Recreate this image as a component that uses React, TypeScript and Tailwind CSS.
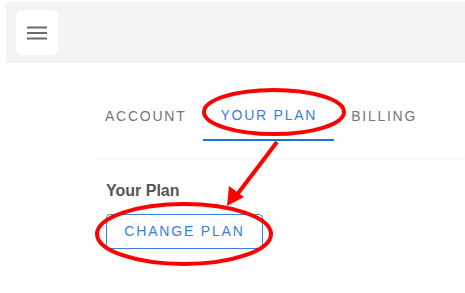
const font = { fontFamily: '"Liberation Sans", Arial, sans-serif' };

// Red markup drawn over the screenshot: two ellipses and an arrow.
function Annotations() {
  return (
    <svg
      className="pointer-events-none absolute inset-0"
      width="465"
      height="293"
      viewBox="0 0 465 293"
    >
      <ellipse cx="274" cy="112" rx="70" ry="22" fill="none" stroke="#f00" strokeWidth="4" />
      <ellipse cx="184" cy="234" rx="87" ry="30" fill="none" stroke="#f00" strokeWidth="4" />
      <line x1="277" y1="142" x2="236" y2="196" stroke="#f00" strokeWidth="4" />
      <polygon points="227,206 229,186 244,197" fill="#f00" />
    </svg>
  );
}

function Hamburger() {
  return (
    <svg width="20" height="14" viewBox="0 0 20 14">
      <rect x="0" y="0.5" width="20" height="2" fill="#6b6b6b" />
      <rect x="0" y="6" width="20" height="2" fill="#6b6b6b" />
      <rect x="0" y="11.5" width="20" height="2" fill="#6b6b6b" />
    </svg>
  );
}

export default function App() {
  return (
    <div className="relative w-[465px] h-[293px] overflow-hidden bg-white" style={font}>
      {/* ---- Top bar ---- */}
      <div className="ml-[6px] mt-[2px] h-[61px] bg-[#f3f3f3] flex items-center pl-[10px]">
        <button
          type="button"
          className="w-[42px] h-[45px] rounded-md bg-white flex items-center justify-center"
        >
          <Hamburger />
        </button>
      </div>

      {/* ---- Tabs ---- */}
      <div className="ml-[88px] mt-[28px] flex text-[14px] tracking-[0.125em] uppercase">
        <div className="h-[50px] px-[17px] flex items-center text-[#757575]">Account</div>
        <div className="h-[50px] px-[17px] flex items-center text-[#3a80d8] border-b-2 border-[#1976d2]">
          Your Plan
        </div>
        <div className="h-[50px] px-[17px] flex items-center text-[#757575]">Billing</div>
      </div>

      {/* ---- Card ---- */}
      <div className="ml-[88px] mt-[19px] rounded-tl-md bg-white shadow-[0_-1px_2px_rgba(0,0,0,0.04)] px-[18px] pt-[19px] h-[140px]">
        <h2 className="text-[16px] font-bold text-[#555]">Your Plan</h2>
        <button
          type="button"
          className="mt-[11px] w-[157px] h-[35px] rounded border border-[#3a80d8] text-[14px] tracking-[0.13em] text-[#3a80d8] uppercase"
        >
          Change Plan
        </button>
      </div>

      <Annotations />
    </div>
  );
}
